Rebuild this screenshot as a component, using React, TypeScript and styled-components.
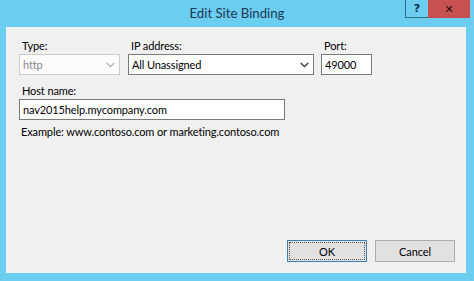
import React from "react";
import styled, { createGlobalStyle } from "styled-components";

const Global = createGlobalStyle`
  html, body { margin: 0; padding: 0; }
  body { width: 474px; height: 281px; overflow: hidden; font-family: Lato, "Noto Sans", sans-serif; }
`;

const Frame = styled.div`
  width: 474px;
  height: 281px;
  background: #6bcdef;
  display: flex;
  flex-direction: column;
  box-sizing: border-box;
`;

const TitleBar = styled.div`
  height: 27px;
  display: flex;
  position: relative;
  justify-content: center;
  align-items: flex-start;
`;

const Title = styled.div`
  font-size: 13.2px;
  color: #1b3a56;
  line-height: 26px;
`;

const Caption = styled.div`
  position: absolute;
  right: 4px;
  top: 0;
  display: flex;
`;

const CapButton = styled.div<{ $close?: boolean }>`
  height: 18px;
  width: ${(p) => (p.$close ? "42px" : "23px")};
  background: ${(p) => (p.$close ? "#c75050" : "#6bcdef")};
  box-sizing: border-box;
  border-left: ${(p) => (p.$close ? "none" : "1px solid #2d6d8a")};
  border-bottom: ${(p) => (p.$close ? "none" : "1px solid #2d6d8a")};
  display: flex;
  align-items: center;
  justify-content: center;
  font-family: "DejaVu Sans", sans-serif;
  font-weight: bold;
  font-size: 11px;
  color: ${(p) => (p.$close ? "#1e1010" : "#0e2a4a")};
`;

const Client = styled.div`
  flex: 1;
  margin: 0 8px 8px 6px;
  background: #f0f0f0;
  display: flex;
  flex-direction: column;
  padding: 12px 11px 11px 13px;
  box-sizing: border-box;
  font-size: 11px;
  letter-spacing: -0.12px;
  color: #000;
`;

const Row = styled.div`
  display: flex;
  align-items: flex-start;
`;

const Field = styled.div<{ $w: number; $ml?: number }>`
  display: flex;
  flex-direction: column;
  width: ${(p) => p.$w}px;
  margin-left: ${(p) => p.$ml ?? 0}px;
`;

const Label = styled.div<{ $mt?: number }>`
  height: 15px;
  line-height: 14px;
  padding-left: 3px;
  margin-top: ${(p) => p.$mt ?? 0}px;
  color: #000;
`;

const Box = styled.div<{ $disabled?: boolean }>`
  height: 21px;
  box-sizing: border-box;
  border: 1px solid ${(p) => (p.$disabled ? "#cccccc" : "#7a7a7a")};
  background: ${(p) => (p.$disabled ? "#fcfcfc" : "#ffffff")};
  color: ${(p) => (p.$disabled ? "#8a8a8a" : "#000")};
  display: flex;
  align-items: center;
  padding-left: 3px;
  padding-right: 4px;
  white-space: nowrap;
`;

const BoxText = styled.span`
  flex: 1;
`;

const Chevron = ({ color }: { color: string }) => (
  <svg width="9" height="6" viewBox="0 0 9 6">
    <path d="M0.8 1 L4.5 4.7 L8.2 1" fill="none" stroke={color} strokeWidth="1.3" />
  </svg>
);

const Example = styled.div`
  margin-top: 4px;
  padding-left: 2px;
  line-height: 15px;
`;

const Spacer = styled.div`
  flex: 1;
`;

const Buttons = styled.div`
  display: flex;
  justify-content: flex-end;
  gap: 8px;
`;

const Button = styled.div<{ $default?: boolean }>`
  width: 80px;
  height: 22px;
  box-sizing: border-box;
  background: #e1e1e1;
  border: 1px solid ${(p) => (p.$default ? "#3c7fb1" : "#adadad")};
  display: flex;
  align-items: center;
  justify-content: center;
  position: relative;
  &::after {
    content: "";
    display: ${(p) => (p.$default ? "block" : "none")};
    position: absolute;
    inset: 1px;
    border: 1px dotted #555;
  }
`;

export default function App() {
  return (
    <>
      <Global />
      <Frame>
        <TitleBar>
          <Title>Edit Site Binding</Title>
          <Caption>
            <CapButton>?</CapButton>
            <CapButton $close>✕</CapButton>
          </Caption>
        </TitleBar>
        <Client>
          <Row>
            <Field $w={101}>
              <Label>Type:</Label>
              <Box $disabled>
                <BoxText>http</BoxText>
                <Chevron color="#b5b5b5" />
              </Box>
            </Field>
            <Field $w={186} $ml={8}>
              <Label>IP address:</Label>
              <Box>
                <BoxText>All Unassigned</BoxText>
                <Chevron color="#333" />
              </Box>
            </Field>
            <Field $w={51} $ml={7}>
              <Label>Port:</Label>
              <Box>
                <BoxText>49000</BoxText>
              </Box>
            </Field>
          </Row>
          <Row>
            <Field $w={266}>
              <Label $mt={9}>Host name:</Label>
              <Box>
                <BoxText>nav2015help.mycompany.com</BoxText>
              </Box>
            </Field>
          </Row>
          <Example>Example: www.contoso.com or marketing.contoso.com</Example>
          <Spacer />
          <Buttons>
            <Button $default>OK</Button>
            <Button>Cancel</Button>
          </Buttons>
        </Client>
      </Frame>
    </>
  );
}
